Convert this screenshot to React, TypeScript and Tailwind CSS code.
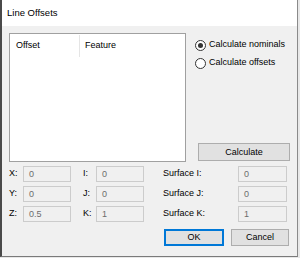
import React from 'react';

function Field({ value, wide }: { value: string; wide?: boolean }) {
  return (
    <div
      className={`${wide ? 'w-[49px]' : 'w-[48px]'} h-[16px] border border-[#cccccc] bg-[#f0f0f0] text-[#6d6d6d] pl-[5px] leading-[14px]`}
    >
      {value}
    </div>
  );
}

function Radio({ checked, label }: { checked?: boolean; label: string }) {
  return (
    <div className="flex items-center gap-[3px] h-[18px] whitespace-nowrap">
      <span className="w-[11px] h-[11px] rounded-full border border-[#333333] bg-white flex items-center justify-center">
        {checked && <span className="w-[5px] h-[5px] rounded-full bg-[#333333]" />}
      </span>
      <span>{label}</span>
    </div>
  );
}

export default function App() {
  const rows = [
    ['X:', '0', 'I:', '0', 'Surface I:', '0'],
    ['Y:', '0', 'J:', '0', 'Surface J:', '0'],
    ['Z:', '0.5', 'K:', '1', 'Surface K:', '1'],
  ];

  return (
    <div className="w-[300px] h-[258px] bg-[#e8e8e8] font-['Liberation_Sans',Arial,sans-serif] text-[9px] text-black">
      <div className="w-[298px] h-[257px] flex flex-col border-l-2 border-l-[#4a4a4a] border-r border-r-[#8a8a8a] border-b border-b-[#7a7a7a] bg-[#f0f0f0]">
        {/* Title bar */}
        <div className="h-[26px] shrink-0 bg-white flex items-center pl-[5px] text-[9.5px]">
          Line Offsets
        </div>

        <div className="flex pt-[7px] pl-[7px]">
          {/* List */}
          <div className="w-[177px] h-[129px] border border-[#a0a0a0] bg-white">
            <div className="flex h-[24px] items-center">
              <div className="w-[70px] pl-[6px] border-r border-[#e5e5e5] h-[22px] flex items-center">Offset</div>
              <div className="pl-[5px]">Feature</div>
            </div>
          </div>

          {/* Right column */}
          <div className="flex flex-col pl-[9px] h-[129px]">
            <div className="pt-[3px]">
              <Radio checked label="Calculate nominals" />
              <Radio label="Calculate offsets" />
            </div>
            <div className="mt-auto mb-[1px]">
              <button className="w-[92px] h-[18px] ml-[3px] border border-[#adadad] bg-[#e1e1e1] leading-[16px]">
                Calculate
              </button>
            </div>
          </div>
        </div>

        {/* Coordinates */}
        <div className="flex flex-col gap-[4px] pt-[4px] pl-[7px]">
          {rows.map((r) => (
            <div key={r[0]} className="flex items-center h-[16px]">
              <span className="w-[14px]">{r[0]}</span>
              <Field value={r[1]} />
              <span className="w-[25px] pl-[12px]">{r[2]}</span>
              <Field value={r[3]} />
              <span className="w-[94px] pl-[19px]">{r[4]}</span>
              <Field value={r[5]} wide />
            </div>
          ))}
        </div>

        <div className="flex justify-end gap-[7px] pr-[8px] pt-[7px]">
          <button className="w-[60px] h-[17px] border border-[#0078d7] outline outline-1 -outline-offset-2 outline-[#0078d7] bg-[#e1e1e1] leading-[15px]">
            OK
          </button>
          <button className="w-[58px] h-[17px] border border-[#adadad] bg-[#e1e1e1] leading-[15px]">
            Cancel
          </button>
        </div>
      </div>
    </div>
  );
}
